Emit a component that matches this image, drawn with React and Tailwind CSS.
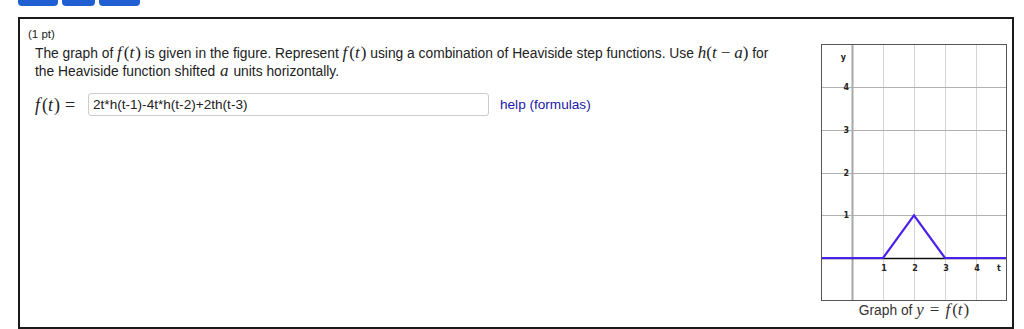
import React from 'react';

const xs = (t) => 31 + 31 * t;
const ys = (v) => 214 - 42.67 * v;

const Graph = () => {
    const vLines = [0, 1, 2, 3, 4];
    const hLines = [1, 2, 3, 4];
    return (
        <svg width="186" height="257" viewBox="0 0 186 257" className="block">
            <rect x="0" y="0" width="186" height="257" fill="#fff" />
            {vLines.map((t) => (
                <line key={'v' + t} x1={xs(t) + 0.5} y1="0" x2={xs(t) + 0.5} y2="257" stroke="#d4d4d4" strokeWidth="1" />
            ))}
            {hLines.map((v) => (
                <line key={'h' + v} x1="0" y1={Math.round(ys(v)) + 0.5} x2="186" y2={Math.round(ys(v)) + 0.5} stroke="#b0b0b0" strokeWidth="1" />
            ))}
            <line x1={xs(0) + 0.5} y1="0" x2={xs(0) + 0.5} y2="257" stroke="#a8a8a8" strokeWidth="2" />
            <line x1="0" y1="214.5" x2="186" y2="214.5" stroke="#111" strokeWidth="1.5" />
            <polyline
                points={`0,214 ${xs(1)},214 ${xs(2)},${ys(1)} ${xs(3)},214 186,214`}
                fill="none"
                stroke="#4b1ff0"
                strokeWidth="2.2"
            />
            <g fontFamily="'DejaVu Sans', sans-serif" fontSize="8" fontWeight="bold" fill="#222">
                <text x="25" y="13" textAnchor="end" dominantBaseline="middle">y</text>
                {[4, 3, 2, 1].map((v) => (
                    <text key={'yl' + v} x="28" y={ys(v) + 0.5} textAnchor="end" dominantBaseline="middle">{v}</text>
                ))}
                {[1, 2, 3, 4].map((t) => (
                    <text key={'xl' + t} x={xs(t) + 1} y="224" textAnchor="middle" dominantBaseline="middle">{t}</text>
                ))}
                <text x="178" y="224" textAnchor="middle" dominantBaseline="middle">t</text>
            </g>
            <rect x="0.5" y="0.5" width="185" height="256" fill="none" stroke="#555" strokeWidth="1" />
        </svg>
    );
};

// math bits, a bit bigger than the body text like the MathJax output
const M = ({ children, className = '' }) => (
    <span className={"font-['Liberation_Serif',serif] text-[17px] leading-none " + className}>{children}</span>
);

const Ft = () => (
    <>
        <i className="pr-[2px]">f</i>(<i className="pr-[1px]">t</i>)
    </>
);

const App = () => {
    return (
        <div className="bg-white w-[1024px] h-[329px] overflow-hidden font-['Liberation_Sans',Arial,sans-serif] text-[#222]">
            <div className="flex gap-[4px] pl-[18px]">
                <div className="h-[6px] w-[40px] rounded-b-[4px] bg-[#1f5fd2]" />
                <div className="h-[6px] w-[33px] rounded-b-[4px] bg-[#1f5fd2]" />
                <div className="h-[6px] w-[41px] rounded-b-[4px] bg-[#1f5fd2]" />
            </div>

            <div className="mt-[11px] ml-[18px] w-[996px] h-[312px] border-2 border-[#1a1a1a] flex">
                <div className="flex-1 pl-[8px] pt-[8px]">
                    <p className="text-[11.5px] leading-[14px]">(1 pt)</p>
                    <div className="pl-[7px] mt-[3px] text-[13.8px] leading-[17px] whitespace-nowrap">
                        <p>
                            The graph of <M><Ft /></M> is given in the figure. Represent <M><Ft /></M> using a combination of Heaviside step functions. Use <M><i>h</i>(<i>t</i><span className="mx-[4px]">−</span><i>a</i>)</M> for
                        </p>
                        <p>
                            the Heaviside function shifted <M><i className="px-[1px]">a</i></M> units horizontally.
                        </p>

                        <div className="mt-[13px] flex items-center">
                            <span className="w-[53px] font-['Liberation_Serif',serif] text-[18px] leading-[20px]">
                                <Ft /><span className="ml-[5px]">=</span>
                            </span>
                            <input
                                type="text"
                                defaultValue="2t*h(t-1)-4t*h(t-2)+2th(t-3)"
                                className="w-[401px] h-[23px] rounded-[3px] border border-[#ccc] px-[4px] text-[13.6px] text-[#222] outline-none"
                            />
                            <a href="#" className="ml-[11px] text-[13.6px] text-[#2117a8]">
                                help (formulas)
                            </a>
                        </div>
                    </div>
                </div>

                <div className="w-[186px] mr-[5px] mt-[25px]">
                    <Graph />
                    <p className="text-center text-[13.8px] leading-[17px] text-[#333] whitespace-nowrap">
                        Graph of <M><i>y</i><span className="mx-[6px]">=</span><Ft /></M>
                    </p>
                </div>
            </div>
        </div>
    );
};

export default App;
